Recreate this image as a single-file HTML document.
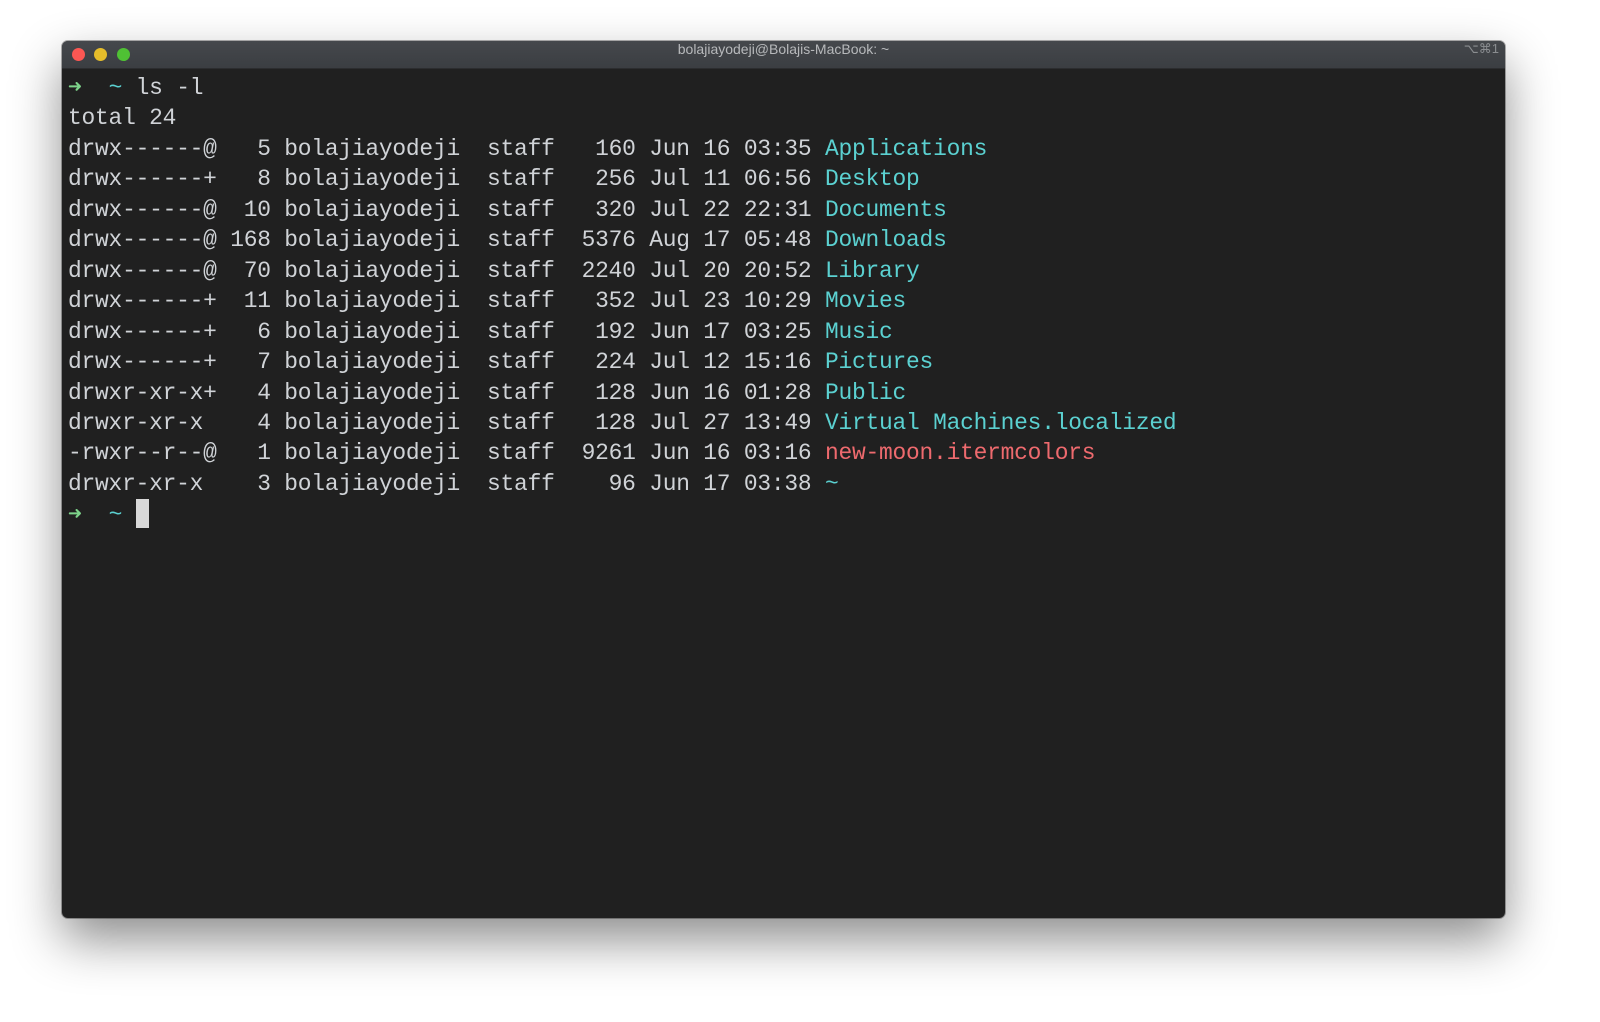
<!DOCTYPE html>
<html><head><meta charset="utf-8"><style>
html,body{margin:0;padding:0;width:1600px;height:1022px;background:#fff;overflow:hidden}
.win{position:absolute;left:62px;top:41px;width:1443px;height:877px;background:#202020;border-radius:6px;overflow:hidden;box-shadow:0 22px 50px rgba(0,0,0,.45),0 0 0 1px rgba(0,0,0,.3)}
.tb{position:absolute;left:0;top:0;width:100%;height:27px;background:linear-gradient(#45484c,#3b3e42);border-bottom:1px solid #2c2d2f}
.dot{position:absolute;top:7px;width:13px;height:13px;border-radius:50%}
.t{position:absolute;top:0;width:100%;text-align:center;line-height:28px;font:14px "Liberation Sans",sans-serif;color:#b7b9bb}
.k{position:absolute;right:6px;top:0;line-height:28px;font:13px "Liberation Sans","DejaVu Sans",sans-serif;color:#8a8d90}
pre{position:absolute;left:6px;top:32px;margin:0;font:22.9px/30.45px "Liberation Mono",monospace;letter-spacing:-0.22px;color:#d0d3d7}
.c{color:#5bd1d1}.r{color:#ee6a6e}.g{color:#7dd38a}
.cur{display:inline-block;width:13px;height:29px;background:#d8d8d8;vertical-align:-7px}
</style></head><body>
<div class="win">
<div class="tb">
<div class="dot" style="left:10px;background:#fc5753"></div>
<div class="dot" style="left:32px;background:#e5bd2b"></div>
<div class="dot" style="left:55px;background:#4fc134"></div>
<div class="t">bolajiayodeji@Bolajis-MacBook: ~</div>
<div class="k">⌥⌘1</div>
</div>
<pre><span class="g">➜</span>  <span class="c">~</span> ls -l
total 24
drwx------@   5 bolajiayodeji  staff   160 Jun 16 03:35 <span class="c">Applications</span>
drwx------+   8 bolajiayodeji  staff   256 Jul 11 06:56 <span class="c">Desktop</span>
drwx------@  10 bolajiayodeji  staff   320 Jul 22 22:31 <span class="c">Documents</span>
drwx------@ 168 bolajiayodeji  staff  5376 Aug 17 05:48 <span class="c">Downloads</span>
drwx------@  70 bolajiayodeji  staff  2240 Jul 20 20:52 <span class="c">Library</span>
drwx------+  11 bolajiayodeji  staff   352 Jul 23 10:29 <span class="c">Movies</span>
drwx------+   6 bolajiayodeji  staff   192 Jun 17 03:25 <span class="c">Music</span>
drwx------+   7 bolajiayodeji  staff   224 Jul 12 15:16 <span class="c">Pictures</span>
drwxr-xr-x+   4 bolajiayodeji  staff   128 Jun 16 01:28 <span class="c">Public</span>
drwxr-xr-x    4 bolajiayodeji  staff   128 Jul 27 13:49 <span class="c">Virtual Machines.localized</span>
-rwxr--r--@   1 bolajiayodeji  staff  9261 Jun 16 03:16 <span class="r">new-moon.itermcolors</span>
drwxr-xr-x    3 bolajiayodeji  staff    96 Jun 17 03:38 <span class="c">~</span>
<span class="g">➜</span>  <span class="c">~</span> <span class="cur"></span></pre>
</div>
</body></html>
